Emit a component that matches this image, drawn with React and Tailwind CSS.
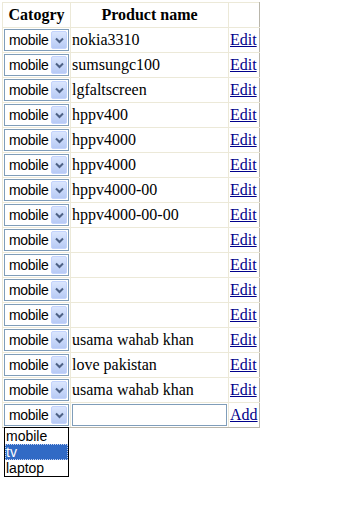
import React from "react";

const products = [
  "nokia3310",
  "sumsungc100",
  "lgfaltscreen",
  "hppv400",
  "hppv4000",
  "hppv4000",
  "hppv4000-00",
  "hppv4000-00-00",
  "",
  "",
  "",
  "",
  "usama wahab khan",
  "love pakistan",
  "usama wahab khan",
];

const Chevron = () => (
  <svg width="9" height="7" viewBox="0 0 9 7">
    <path d="M1 1.5 L4.5 5 L8 1.5" fill="none" stroke="#4d6185" strokeWidth="2" />
  </svg>
);

const FakeSelect = () => (
  <div className="flex h-[22px] w-[65px] items-center border border-[#7f9db9] bg-white pl-[4px] pr-[1px] font-['Liberation_Sans',sans-serif] text-[14px] tracking-[-0.3px] text-black">
    <span className="flex-1 leading-none">mobile</span>
    <span className="flex h-[18px] w-[16px] items-center justify-center rounded-[2px] border border-[#c3d3fd] bg-gradient-to-b from-[#dbe6fd] to-[#b7caf5]">
      <Chevron />
    </span>
  </div>
);

const App = () => {
  return (
    <div className="min-h-[511px] bg-white p-[2px] font-['Liberation_Serif',serif] text-[16px] text-black">
      <table className="border-collapse border border-[#ece9d8] border-r-[#b9b6ab] border-b-[#b9b6ab]">
        <thead>
          <tr className="h-[25px]">
            <th className="w-[67px] border border-[#ece9d8] px-[2px] text-center font-bold">Catogry</th>
            <th className="w-[158px] border border-[#ece9d8] px-[2px] text-center font-bold">Product name</th>
            <th className="w-[31px] border border-[#ece9d8] border-r-[#b9b6ab]"></th>
          </tr>
        </thead>
        <tbody>
          {products.map((name, i) => (
            <tr key={i} className="h-[25px]">
              <td className="border border-[#ece9d8] p-[1px]">
                <FakeSelect />
              </td>
              <td className="border border-[#ece9d8] px-[1px] leading-none">{name}</td>
              <td className="border border-[#ece9d8] border-r-[#b9b6ab] px-[1px]">
                <a href="#" className="text-[#00008b] underline">Edit</a>
              </td>
            </tr>
          ))}
          <tr className="h-[25px]">
            <td className="relative border border-[#ece9d8] border-b-[#b9b6ab] p-[1px]">
              <FakeSelect />
              <div className="absolute left-[1px] top-[24px] z-10 w-[65px] border border-black bg-white font-['Liberation_Sans',sans-serif] text-[14px] leading-[16px]">
                <div className="px-[1px]">mobile</div>
                <div className="border border-dotted border-[#c6d4f2] bg-[#316ac5] px-0 leading-[14px] text-white">tv</div>
                <div className="px-[1px]">laptop</div>
              </div>
            </td>
            <td className="border border-[#ece9d8] border-b-[#b9b6ab] p-[1px]">
              <div className="h-[22px] w-[155px] border border-[#7f9db9] bg-white"></div>
            </td>
            <td className="border border-[#ece9d8] border-r-[#b9b6ab] border-b-[#b9b6ab] px-[1px]">
              <a href="#" className="text-[#00008b] underline">Add</a>
            </td>
          </tr>
        </tbody>
      </table>
    </div>
  );
};

export default App;
